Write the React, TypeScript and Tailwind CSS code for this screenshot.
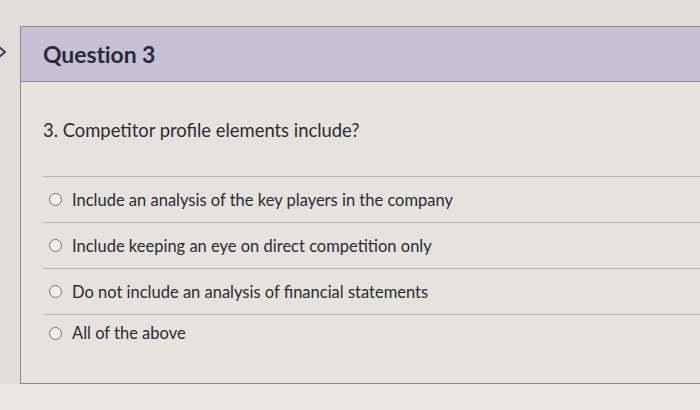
const options = [
  "Include an analysis of the key players in the company",
  "Include keeping an eye on direct competition only",
  "Do not include an analysis of financial statements",
  "All of the above",
];

export default function App() {
  return (
    <div
      className="w-[700px] h-[410px] overflow-hidden bg-[#e0ddd8] text-[#2c2a36] relative"
      style={{ fontFamily: "Lato, 'Open Sans', sans-serif" }}
    >
      {/* collapse chevron peeking from the left */}
      <div className="absolute left-[-6px] top-[44px]">
        <svg width="14" height="16" viewBox="0 0 14 16" fill="none">
          <path d="M4 2l7 6-7 6" stroke="#3a3844" strokeWidth="2" strokeLinecap="round" strokeLinejoin="round" />
        </svg>
      </div>

      <div className="pt-[26px] pl-[20px] bg-[#e0ddd8]">
        <div className="w-[720px] border-l border-t border-b border-[#8d8b89] bg-[#e6e3dc]">
          {/* Header */}
          <div className="h-[55px] flex items-center pl-[22px] bg-[#c6c1d7] border-b border-[#85838a]">
            <h2 className="text-[23px] font-bold tracking-[-0.1px]">Question 3</h2>
          </div>

          {/* Body */}
          <div className="pl-[22px] pt-[36px] pb-[4px]">
            <p className="text-[18.4px] leading-[24px]">3. Competitor profile elements include?</p>

            <div className="mt-[34px] border-t border-[#b9b6b0]">
              {options.map((opt, i) => (
                <div
                  key={opt}
                  className={
                    i < options.length - 1
                      ? "h-[46px] flex items-center gap-[10px] pl-[6px] border-b border-[#b9b6b0]"
                      : "h-[36px] flex items-center gap-[10px] pl-[6px]"
                  }
                >
                  <span className="w-[13px] h-[13px] rounded-full border-[1.5px] border-[#75737a] bg-[#f1efea]" />
                  <span className="text-[16.5px] leading-[20px]">{opt}</span>
                </div>
              ))}
              <div className="h-[28px]" />
            </div>
          </div>
        </div>
      </div>
      <div className="h-[30px] bg-[#ebe9e4]" />
    </div>
  );
}
